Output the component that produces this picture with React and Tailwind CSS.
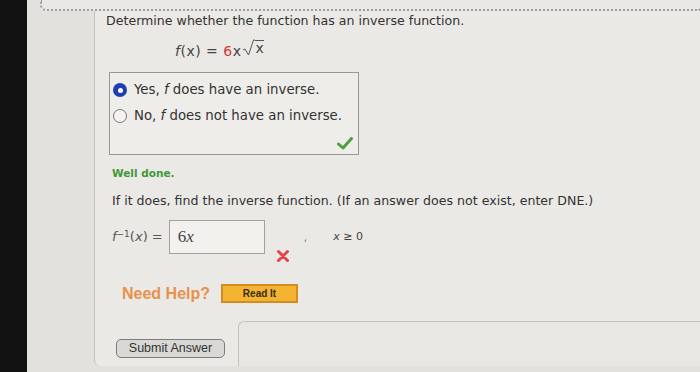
import React from "react";

const Radio = ({ checked }) =>
  checked ? (
    <span className="w-[14px] h-[14px] rounded-full bg-[#1f3fb0] flex items-center justify-center shrink-0">
      <span className="w-[5px] h-[5px] rounded-full bg-white"></span>
    </span>
  ) : (
    <span className="w-[14px] h-[14px] rounded-full border border-[#777] bg-[#f4f3f0] shrink-0"></span>
  );

export default function App() {
  return (
    <div
      className="w-[700px] h-[372px] flex overflow-hidden bg-[#e3e1dd] text-[#333]"
      style={{ fontFamily: '"DejaVu Sans", Verdana, sans-serif' }}
    >
      <div className="w-[27px] bg-[#121212] shrink-0"></div>
      <div className="flex-1 flex flex-col">
        {/* top panel edge */}
        <div className="h-[11px] ml-[13px] border-b-2 border-l-2 border-dotted border-[#9a9aa8] rounded-bl-md bg-[#e9e8e4] shrink-0"></div>
        <div className="flex flex-1">
          <div className="w-[67px] shrink-0"></div>
          <div className="flex-1 flex flex-col border-l border-[#c4c2be] bg-[#eae9e5] rounded-bl-md mb-[6px]">
            <div className="pl-[11px] pt-[2px] text-[12.6px] leading-[16px]">
              <p>Determine whether the function has an inverse function.</p>
              <p className="mt-[10px] ml-[69px] text-[14px] text-[#444] tracking-[0.5px]">
                <i>f</i>(x) = <span className="text-[#d0383a]">6</span>x
                <span className="inline-flex items-end">
                  <svg width="13" height="17" viewBox="0 0 13 17" className="inline">
                    <path d="M1 11 L3 10 L6.5 16 L11.5 1 L14 1" fill="none" stroke="#555" strokeWidth="1" />
                  </svg>
                  <span className="border-t border-[#555] leading-[15px] pl-[1px]">x</span>
                </span>
              </p>

              <div className="mt-[13px] ml-[3px] w-[250px] h-[83px] border border-[#9a9894] bg-[#eeede9] flex flex-col text-[13.3px]">
                <div className="flex items-center gap-[7px] pl-[3px] mt-[9px]">
                  <Radio checked />
                  <span>
                    Yes, <i>f</i> does have an inverse.
                  </span>
                </div>
                <div className="flex items-center gap-[7px] pl-[3px] mt-[10px]">
                  <Radio />
                  <span>
                    No, <i>f</i> does not have an inverse.
                  </span>
                </div>
                <div className="flex justify-end pr-[5px] mt-[13px]">
                  <svg width="16" height="13" viewBox="0 0 16 13">
                    <path d="M1.5 7 L6 11 L14.5 1.5" fill="none" stroke="#4f9e45" strokeWidth="3" strokeLinecap="round" strokeLinejoin="round" />
                  </svg>
                </div>
              </div>

              <p className="mt-[10px] ml-[6px] text-[10.5px] font-bold text-[#3f9a38]">Well done.</p>
              <p className="mt-[12px] ml-[6px]">
                If it does, find the inverse function. (If an answer does not exist, enter DNE.)
              </p>

              <div className="flex items-start mt-[11px] ml-[6px]">
                <span className="mt-[9px] text-[13px] text-[#555]">
                  <i>f</i>
                  <sup className="text-[9px]">−1</sup>(<i>x</i>) =
                </span>
                <div
                  className="ml-[6px] w-[96px] h-[34px] border border-[#a3a19d] bg-[#f2f1ee] flex items-center pl-[8px] text-[17px] text-[#444]"
                  style={{ fontFamily: '"Liberation Serif", "Times New Roman", serif' }}
                >
                  6<i>x</i>
                </div>
                <svg width="14" height="14" viewBox="0 0 14 14" className="ml-[11px] mt-[29px]">
                  <path d="M2.5 2.5 L11.5 11.5 M11.5 2.5 L2.5 11.5" stroke="#e0474c" strokeWidth="3" strokeLinecap="round" />
                </svg>
                <span className="ml-[14px] mt-[10px] text-[#777] text-[11px]">,</span>
                <span className="ml-[26px] mt-[9px] text-[11px] text-[#444]">
                  <i>x</i> ≥ 0
                </span>
              </div>

              <div
                className="flex items-center mt-[21px] ml-[16px]"
                style={{ fontFamily: '"Liberation Sans", Arial, sans-serif' }}
              >
                <span className="text-[16px] font-bold text-[#e8914c]">Need Help?</span>
                <span className="ml-[11px] w-[77px] h-[19px] bg-[#f2b431] border-2 border-[#d68a22] flex items-center justify-center text-[10px] font-bold text-[#3a2a10]">
                  Read It
                </span>
              </div>
            </div>

            <div className="flex flex-1 mt-[18px]">
              <div className="w-[143px] shrink-0 pt-[18px] pl-[21px]">
                <div
                  className="w-[109px] h-[19px] rounded-[5px] border border-[#7c7c7c] bg-[#d9d8d5] flex items-center justify-center text-[12.5px] text-[#333]"
                  style={{ fontFamily: '"Liberation Sans", Arial, sans-serif' }}
                >
                  Submit Answer
                </div>
              </div>
              <div className="flex-1 border-t border-l border-[#c4c2be] rounded-tl-md bg-[#e8e7e3]"></div>
            </div>
          </div>
        </div>
      </div>
    </div>
  );
}
